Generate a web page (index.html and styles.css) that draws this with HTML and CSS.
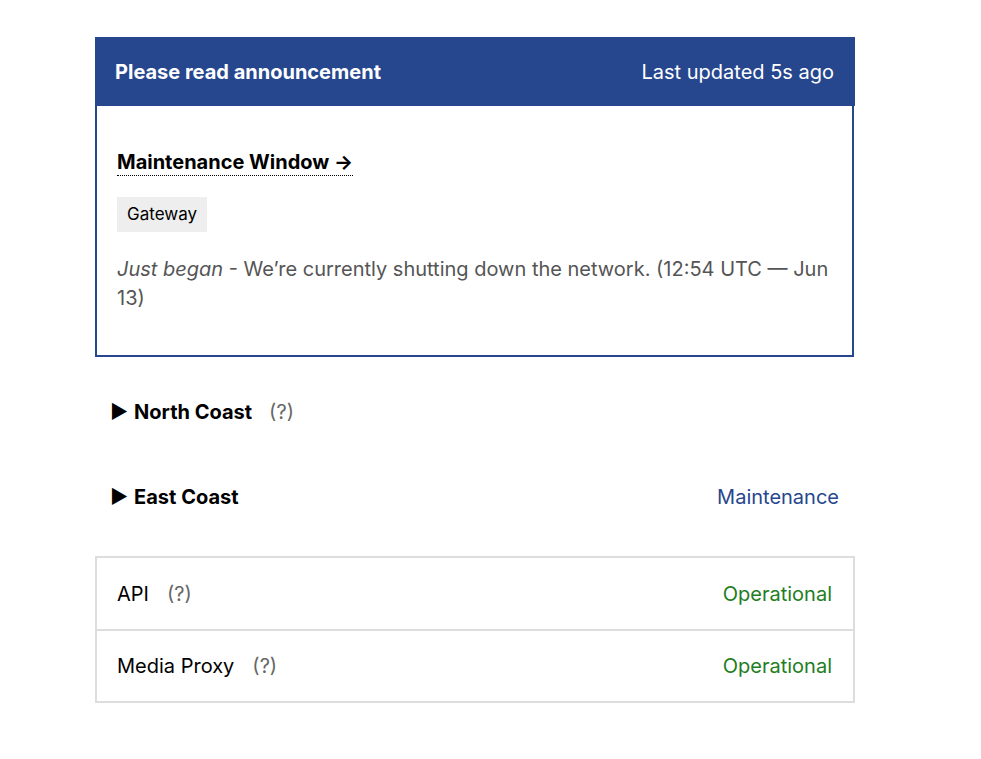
FILE: index.html
```html
<!DOCTYPE html>
<html>
<head>
<meta charset="utf-8">
<link rel="stylesheet" href="styles.css">
</head>
<body>
<main class="page">
  <section class="announce">
    <header class="announce-head">
      <span class="announce-title">Please read announcement</span>
      <span class="announce-updated">Last updated 5s ago</span>
    </header>
    <div class="announce-body">
      <a class="incident-link" href="#">Maintenance Window →</a>
      <div class="tags"><span class="tag">Gateway</span></div>
      <p class="incident-text"><em>Just began</em> - We’re currently shutting down the network. (12:54 UTC — Jun 13)</p>
    </div>
  </section>

  <div class="groups">
    <div class="group">
      <span class="group-name"><span class="caret">▶</span>North Coast</span>
      <span class="help">(?)</span>
    </div>
    <div class="group">
      <span class="group-name"><span class="caret">▶</span>East Coast</span>
      <span class="group-status maint">Maintenance</span>
    </div>
  </div>

  <div class="components">
    <div class="comp">
      <span class="comp-name">API<span class="help">(?)</span></span>
      <span class="ok">Operational</span>
    </div>
    <div class="comp">
      <span class="comp-name">Media Proxy<span class="help">(?)</span></span>
      <span class="ok">Operational</span>
    </div>
  </div>
</main>
</body>
</html>
```

FILE: styles.css
```css
* { box-sizing: border-box; }
html, body { margin: 0; padding: 0; background: #fff; }
body {
  font-family: Inter, "Noto Sans", "Liberation Sans", sans-serif;
  color: #000;
  font-size: 20px;
}
.page {
  width: 760px;
  margin: 37px 0 0 95px;
}
.announce-head {
  background: #26478e;
  color: #fff;
  height: 69px;
  display: flex;
  align-items: center;
  justify-content: space-between;
  padding: 0 21px 0 20px;
  font-size: 20px;
}
.announce-title { font-weight: 700; }
.announce-body {
  border: 2px solid #26478e;
  border-top: none;
  width: 759px;
  padding: 44px 20px 42px 20px;
}
.incident-link {
  color: #000;
  text-decoration: none;
  font-weight: 700;
  font-size: 20px;
  line-height: 24px;
  border-bottom: 1px dotted #000;
  padding-bottom: 1px;
}
.tags { margin-top: 23px; line-height: 0; }
.tag {
  display: inline-block;
  background: #eeeeee;
  font-size: 17px;
  padding: 7px 10px;
  line-height: 21px;
  height: 35px;
}
.incident-text {
  margin: 23px 0 0;
  font-size: 20px;
  line-height: 29px;
  color: #555;
}
.incident-text em { font-style: italic; }
.groups { margin-top: 12px; }
.group {
  display: flex;
  align-items: center;
  justify-content: space-between;
  height: 85px;
  padding: 0 16px 0 15px;
  font-size: 20px;
}
.group-name { font-weight: 700; display: flex; align-items: center; }
.caret { font-size: 19px; margin-right: 6px; }
.group .help { margin-left: 17px; margin-right: auto; }
.help { color: #666; font-weight: 400; font-size: 20px; margin-left: 18px; }
.maint { color: #26478e; font-size: 20px; }
.components {
  border: 2px solid #dddddd;
  margin-top: 17px;
}
.comp {
  display: flex;
  align-items: center;
  justify-content: space-between;
  height: 71px;
  padding: 0 21px 0 20px;
  font-size: 20px;
}
.comp + .comp { border-top: 2px solid #dddddd; height: 72px; }
.ok { color: #1e7e1e; }
```
